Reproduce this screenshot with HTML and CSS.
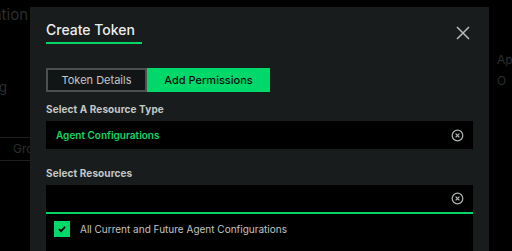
FILE: index.html
```html
<!DOCTYPE html>
<html>
<head>
<meta charset="utf-8">
<link rel="stylesheet" href="styles.css">
</head>
<body>
<div class="page">
  <div class="bg-left">
    <div class="bg-title">Integration</div>
    <div class="bg-sub">Config</div>
    <div class="bg-tabs"><span class="bg-tab">Groups</span></div>
  </div>
  <div class="bg-right">
    <div class="bg-a">Ap</div>
    <div class="bg-o">O</div>
  </div>
</div>
<div class="modal">
  <div class="head">
    <h1 class="title">Create Token</h1>
    <svg class="close" width="14" height="14" viewBox="0 0 14 14"><path d="M1 1L13 13M13 1L1 13" stroke="#b8bcbc" stroke-width="1.5" fill="none"/></svg>
  </div>
  <div class="tabs">
    <div class="tab">Token Details</div>
    <div class="tab active">Add Permissions</div>
  </div>
  <div class="label">Select A Resource Type</div>
  <div class="input">
    <span class="value">Agent Configurations</span>
    <svg class="clear" width="13" height="13" viewBox="0 0 13 13"><circle cx="6.5" cy="6.5" r="5.3" stroke="#b0b4b4" stroke-width="1.2" fill="none"/><path d="M4.6 4.6L8.4 8.4M8.4 4.6L4.6 8.4" stroke="#b0b4b4" stroke-width="1.3"/></svg>
  </div>
  <div class="label label2">Select Resources</div>
  <div class="input focused">
    <span class="value"></span>
    <svg class="clear" width="13" height="13" viewBox="0 0 13 13"><circle cx="6.5" cy="6.5" r="5.3" stroke="#b0b4b4" stroke-width="1.2" fill="none"/><path d="M4.6 4.6L8.4 8.4M8.4 4.6L4.6 8.4" stroke="#b0b4b4" stroke-width="1.3"/></svg>
  </div>
  <div class="menu">
    <div class="option">
      <span class="check"><svg width="10" height="8" viewBox="0 0 10 8"><path d="M2 4.2L4 6.2L8 1.8" stroke="#000" stroke-width="1.8" fill="none"/></svg></span>
      <span>All Current and Future Agent Configurations</span>
    </div>
  </div>
</div>
</body>
</html>
```
FILE: styles.css
```css
html, body {
  margin: 0;
  padding: 0;
  background: #000;
  width: 512px;
  height: 251px;
  overflow: hidden;
  font-family: Inter, "Open Sans", sans-serif;
}
.page {
  display: flex;
  justify-content: space-between;
  height: 251px;
}
.bg-left {
  width: 30px;
  overflow: hidden;
  color: #2c2f2f;
}
.bg-title {
  direction: rtl;
  white-space: nowrap;
  font-size: 15px;
  line-height: 20px;
  padding-top: 5px;
  width: 28px;
}
.bg-sub {
  direction: rtl;
  white-space: nowrap;
  font-size: 13px;
  margin-top: 54px;
  width: 7px;
}
.bg-tabs {
  margin-top: 42px;
  border-top: 1px solid #1c1e1e;
  border-bottom: 1px solid #1c1e1e;
  height: 22px;
  padding-left: 13px;
  white-space: nowrap;
  font-size: 12px;
  line-height: 22px;
}
.bg-right {
  width: 15px;
  overflow: hidden;
  color: #2c2f2f;
  font-size: 12px;
  white-space: nowrap;
  padding-top: 52px;
}
.bg-o { margin-top: 6px; }
.modal {
  position: absolute;
  left: 30px;
  top: 7px;
  width: 427px;
  height: 260px;
  padding: 0 16px;
  background: #181c1c;
}
.head {
  display: flex;
  justify-content: space-between;
  align-items: flex-start;
  height: 61px;
}
.title {
  margin: 0;
  margin-top: 13px;
  font-size: 14px;
  font-weight: 500;
  color: #eceeee;
  line-height: 20px;
  padding-bottom: 2px;
  width: 96px;
  white-space: nowrap;
  border-bottom: 2.5px solid #00d563;
}
.close {
  margin-top: 19px;
  margin-right: 3px;
}
.tabs {
  display: flex;
  height: 24px;
}
.tab {
  box-sizing: border-box;
  height: 24px;
  font-size: 11px;
  line-height: 20px;
  color: #c3c7c7;
  background: #121515;
  border: 2px solid #4c5050;
  width: 101px;
  text-align: center;
}
.tab.active {
  width: 123px;
  background: #00d86a;
  border-color: #00d86a;
  color: #0a0a0a;
  font-weight: 500;
}
.label {
  font-size: 10px;
  font-weight: 700;
  color: #c4c8c8;
  margin-top: 9px;
  line-height: 16px;
  letter-spacing: 0.1px;
}
.label2 {
  margin-top: 16px;
}
.input {
  margin-top: 4px;
  height: 28px;
  background: #000;
  display: flex;
  align-items: center;
  justify-content: space-between;
  padding: 0 10px;
}
.input .clear { margin-right: -1px; }
.value {
  font-size: 10px;
  font-weight: 600;
  color: #14d466;
}
.input.focused {
  height: 27px;
  border-bottom: 2px solid #00d563;
}
.menu {
  background: #000;
  height: 60px;
}
.option {
  display: flex;
  align-items: center;
  gap: 10px;
  padding: 7px 8px;
  font-size: 10px;
  color: #c0c4c4;
}
.check {
  width: 16px;
  height: 16px;
  background: #00d86a;
  display: flex;
  align-items: center;
  justify-content: center;
}
```
